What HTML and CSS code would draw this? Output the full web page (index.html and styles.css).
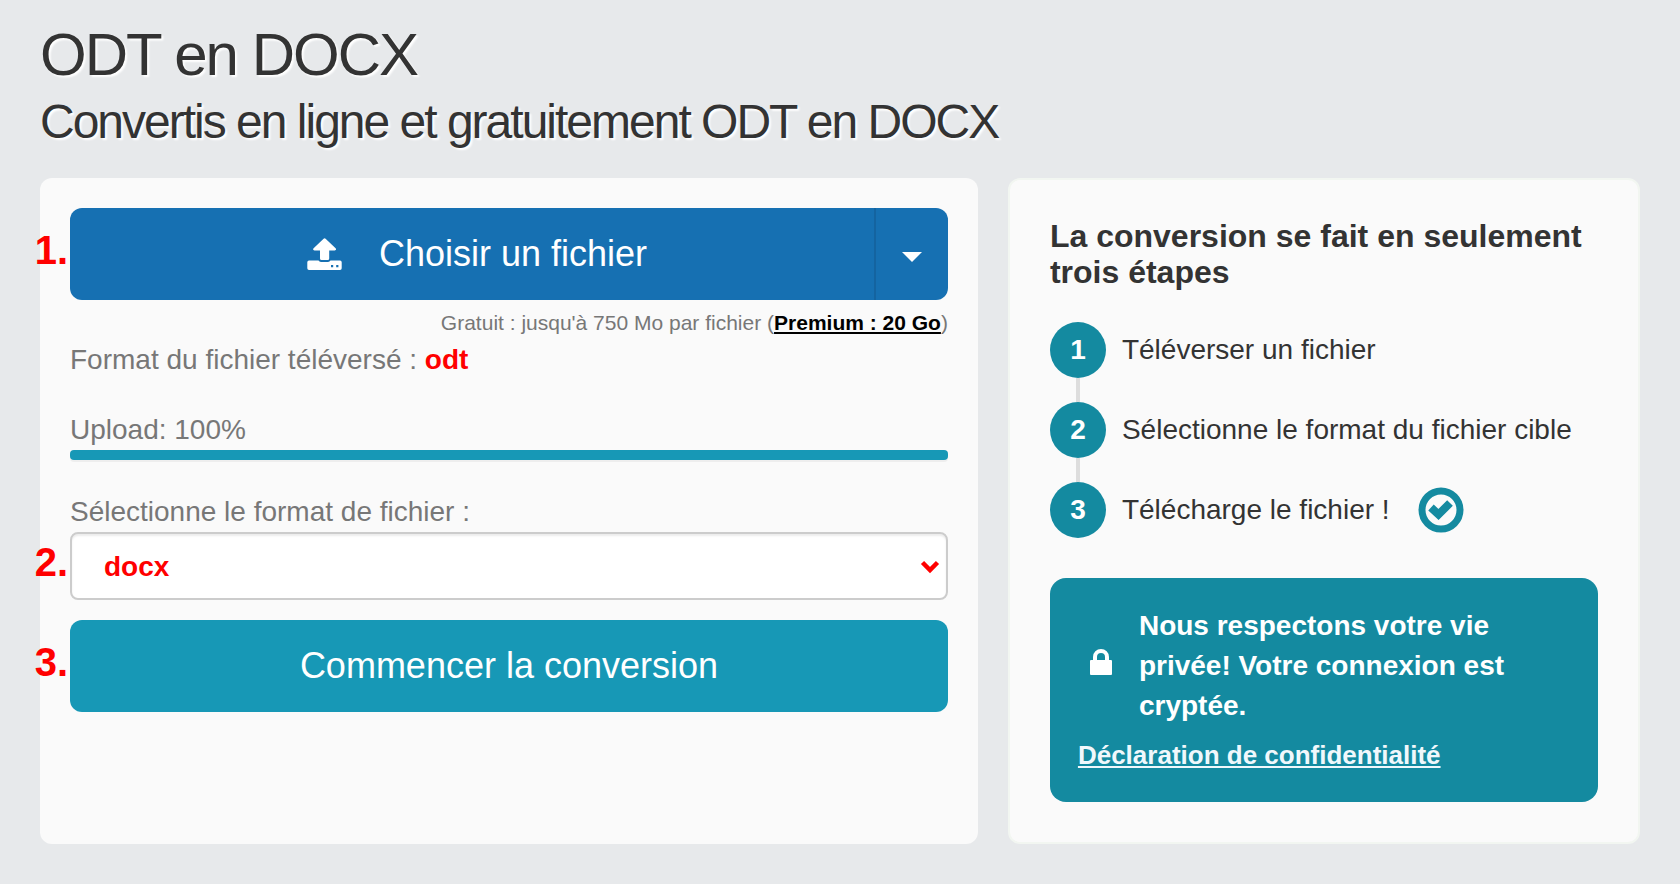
FILE: index.html
```
<!DOCTYPE html>
<html lang="fr">
<head>
    <meta charset="UTF-8">
    <meta name="viewport" content="width=device-width, initial-scale=1.0">
    <title>ODT en DOCX</title>
    <link rel="stylesheet" href="styles.css">
</head>
<body>
    <header class="header">
        <h1>ODT en DOCX</h1>
        <h2>Convertis en ligne et gratuitement ODT en DOCX</h2>
    </header>

    <main class="content">
        <form class="card converter">
            <div class="row">
                <span class="row-number">1.</span>
                <div class="upload">
                    <button type="button" class="btn upload-btn">
                        <svg class="upload-icon" viewBox="0 0 36 32" aria-hidden="true">
                            <path fill="#fff" d="M16.600.7a1.400 1.400 0 0 1 2 0l10 9.600c.9.9.4 2.200-.9 2.200H22.200v8q0 1.500-1.500 1.500h-6.200q-1.500 0-1.500-1.500v-8H7.500c-1.300 0-1.800-1.300-.9-2.200z"/>
                            <path fill="#fff" fill-rule="evenodd" d="M2 22.500h9.500q1.200 1.500 3 1.500h6q1.800 0 3-1.500H33a1.700 1.700 0 0 1 1.700 1.700v6.100A1.700 1.700 0 0 1 33 32H2a1.700 1.700 0 0 1-1.700-1.700v-6.100A1.700 1.700 0 0 1 2 22.500zM24 27v2.200h2.200V27zm5.200 0v2.200h2.200V27z"/>
                        </svg>
                        Choisir un fichier
                    </button>
                    <button type="button" class="btn upload-more" aria-label="Autres sources">
                        <span class="caret"></span>
                    </button>
                </div>
            </div>
            <p class="limit">Gratuit : jusqu'à 750 Mo par fichier (<a href="#">Premium : 20 Go</a>)</p>

            <p class="label">Format du fichier téléversé : <strong>odt</strong></p>

            <p class="label upload-status">Upload: 100%</p>
            <div class="progress"></div>

            <label class="label" for="format">Sélectionne le format de fichier :</label>
            <div class="row">
                <span class="row-number">2.</span>
                <select class="format" id="format">
                    <option>docx</option>
                </select>
                <svg class="chevron" viewBox="0 0 18 12" aria-hidden="true">
                    <path d="M1.500 1.500L9 9l7.500-7.500" fill="none" stroke="#f00" stroke-width="4.500"/>
                </svg>
            </div>

            <div class="row submit-row">
                <span class="row-number">3.</span>
                <button type="button" class="btn start-btn">Commencer la conversion</button>
            </div>
        </form>

        <aside class="card info">
            <h3>La conversion se fait en seulement trois étapes</h3>
            <ol class="steps">
                <li><span class="step-number">1</span>Téléverser un fichier</li>
                <li><span class="step-number">2</span>Sélectionne le format du fichier cible</li>
                <li>
                    <span class="step-number">3</span>Télécharge le fichier !
                    <svg class="check" viewBox="0 0 46 46" aria-hidden="true">
                        <circle cx="23" cy="23" r="19" fill="none" stroke="#148aa0" stroke-width="7"/>
                        <path d="M13 20.500l7.500 7L32 16" fill="none" stroke="#148aa0" stroke-width="8"/>
                    </svg>
                </li>
            </ol>

            <div class="privacy">
                <div class="privacy-text">
                    <svg class="lock" viewBox="0 0 22 26" aria-hidden="true">
                        <path d="M5 13V8a6 6 0 0 1 12 0v5" fill="none" stroke="#fff" stroke-width="4"/>
                        <rect y="11" width="22" height="15" rx="1" fill="#fff"/>
                    </svg>
                    <p>Nous respectons votre vie privée! Votre connexion est cryptée.</p>
                </div>
                <a href="#">Déclaration de confidentialité</a>
            </div>
        </aside>
    </main>
</body>
</html>
```
FILE: styles.css
```
:root {
    --blue: #1670b2;
    --teal: #1798b6;
    --dark-teal: #148aa0;
    --text: #333;
    --muted: #777;
    --red: #f00;
}

* {
    box-sizing: border-box;
}

body {
    font-family: Arial, "Liberation Sans", sans-serif;
    font-size: 28px;
    line-height: 40px;
    color: var(--text);
    background: #e7e9eb;
    margin: 0;
    padding: 22px 40px 40px;
}

h1, h2, h3, p {
    margin: 0;
}

h1, h2 {
    font-weight: normal;
    letter-spacing: -2px;
    text-shadow: 2px 2px 2px #fff;
}

h1 {
    font-size: 60px;
    line-height: 66px;
    margin-bottom: 8px;
}

h2 {
    font-size: 48px;
    line-height: 52px;
    margin-bottom: 30px;
}

.content {
    display: grid;
    grid-template-columns: 46fr 31fr;
    gap: 30px;
}

.card {
    background: #fafafa;
    border-radius: 12px;
}

.converter {
    padding: 30px;
}

.row {
    position: relative;
}

/* red numbers hang over the left edge of the card */
.row-number {
    position: absolute;
    top: 0;
    bottom: 8px;
    right: 100%;
    display: flex;
    align-items: center;
    padding-right: 2px;
    font-size: 40px;
    font-weight: bold;
    color: var(--red);
}

.btn {
    height: 92px;
    border: none;
    border-radius: 12px;
    color: #fff;
    font-family: inherit;
    font-size: 36px;
    cursor: pointer;
}

.upload {
    display: flex;
}

.upload-btn {
    flex: 1;
    display: flex;
    align-items: center;
    justify-content: center;
    gap: 36px;
    padding: 0 0 0 10px;
    background: var(--blue);
    border-radius: 12px 0 0 12px;
}

.upload-icon {
    width: 36px;
    height: 32px;
}

.upload-more {
    display: flex;
    align-items: center;
    justify-content: center;
    width: 74px;
    padding: 6px 0 0;
    background: var(--blue);
    border-left: 2px solid #1464a0;
    border-radius: 0 12px 12px 0;
}

.caret {
    border: 10px solid transparent;
    border-top-color: #fff;
    border-bottom: none;
}

.limit {
    margin: 8px 0 2px;
    font-size: 21px;
    line-height: 30px;
    text-align: right;
    color: var(--muted);
}

.limit a {
    color: #000;
    font-weight: bold;
}

.label {
    display: block;
    color: var(--muted);
}

.label strong {
    color: var(--red);
}

.upload-status {
    margin-top: 30px;
}

.progress {
    height: 10px;
    margin-bottom: 32px;
    background: var(--teal);
    border-radius: 4px;
    box-shadow: 0 2px 0 #eee;
}

.format {
    display: block;
    width: 100%;
    height: 68px;
    padding: 0 32px;
    appearance: none;
    background: #fff;
    border: 2px solid #ccc;
    border-radius: 8px;
    box-shadow: inset 0 2px 2px rgba(0, 0, 0, 0.08);
    color: var(--red);
    font-family: inherit;
    font-size: 28px;
    font-weight: bold;
}

.chevron {
    position: absolute;
    top: 29px;
    right: 9px;
    width: 18px;
    height: 12px;
    overflow: visible;
    pointer-events: none;
}

.submit-row {
    margin-top: 20px;
}

.start-btn {
    width: 100%;
    background: var(--teal);
}

.info {
    padding: 38px 40px 40px;
    border: 2px solid #f2f6f1;
}

.info h3 {
    font-size: 32px;
    line-height: 36px;
    margin-bottom: 32px;
}

.steps {
    display: flex;
    flex-direction: column;
    gap: 24px;
    margin: 0 0 40px;
    padding: 0;
    list-style: none;
}

.steps li {
    position: relative;
    display: flex;
    align-items: center;
    gap: 16px;
}

/* line between two circles */
.steps li + li::before {
    content: "";
    position: absolute;
    left: 26px;
    bottom: 100%;
    width: 4px;
    height: 24px;
    background: #ddd;
}

.step-number {
    width: 56px;
    height: 56px;
    border-radius: 50%;
    background: var(--dark-teal);
    color: #fff;
    font-weight: bold;
    line-height: 56px;
    text-align: center;
}

.check {
    width: 46px;
    height: 46px;
    margin-left: 12px;
}

.privacy {
    padding: 28px;
    background: var(--dark-teal);
    border-radius: 16px;
    color: #fff;
    font-weight: bold;
}

.privacy-text {
    display: flex;
    align-items: center;
    gap: 27px;
    padding-left: 12px;
    margin-bottom: 10px;
}

.lock {
    flex: none;
    width: 22px;
    height: 26px;
    margin-bottom: 8px;
}

.privacy a {
    display: block;
    color: #f0f8fc;
    font-size: 26px;
    line-height: 38px;
}
```
